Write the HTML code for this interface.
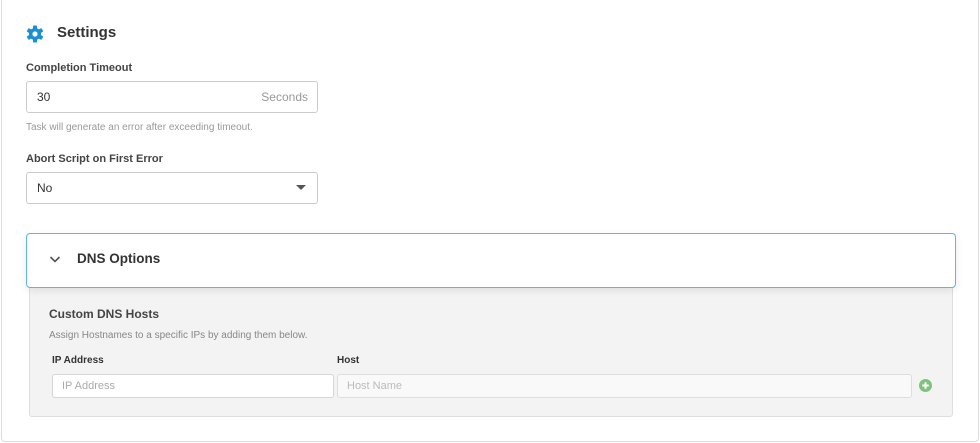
<!DOCTYPE html>
<html><head><style>
*{box-sizing:border-box;margin:0;padding:0}
body{width:980px;height:443px;background:#fff;font-family:"Liberation Sans",sans-serif;position:relative;overflow:hidden;color:#333}
.card{position:absolute;left:1px;top:-10px;width:978px;height:452px;border:1px solid #dcdcdc;border-radius:4px;background:#fff}
.abs{position:absolute}
.lbl{font-size:11px;font-weight:bold;color:#444}
.inp{border:1px solid #ccc;border-radius:3px;background:#fff;height:32px;font-size:12px}
</style></head><body>
<div class="card"></div>
<svg class="abs" style="left:26px;top:25px" width="18" height="18" viewBox="0 0 18 18">
<g fill="#1a8fd6" transform="translate(9 9)">
<rect x="-2" y="-8.5" width="4" height="17" rx="0.8"/>
<rect x="-2" y="-8.5" width="4" height="17" rx="0.8" transform="rotate(60)"/>
<rect x="-2" y="-8.5" width="4" height="17" rx="0.8" transform="rotate(120)"/>
<circle r="6"/>
</g>
<circle cx="9" cy="9" r="2.6" fill="#fff"/>
</svg>
<div class="abs" style="left:57px;top:24px;font-size:15px;font-weight:bold;color:#333">Settings</div>
<div class="abs lbl" style="left:26px;top:62px">Completion Timeout</div>
<div class="abs inp" style="left:26px;top:81px;width:292px"><span class="abs" style="left:10px;top:8px;color:#333">30</span><span class="abs" style="right:9px;top:8px;color:#999">Seconds</span></div>
<div class="abs" style="left:26px;top:122px;font-size:10px;color:#999">Task will generate an error after exceeding timeout.</div>
<div class="abs lbl" style="left:26px;top:153px">Abort Script on First Error</div>
<div class="abs inp" style="left:26px;top:172px;width:292px"><span class="abs" style="left:10px;top:8px">No</span><span class="abs" style="right:11px;top:12px;width:0;height:0;border-left:5px solid transparent;border-right:5px solid transparent;border-top:5px solid #555"></span></div>
<div class="abs" style="left:29px;top:286px;width:924px;height:131px;background:#f3f3f3;border:1px solid #dedede;border-radius:3px"></div>
<div class="abs" style="left:26px;top:233px;width:930px;height:55px;border:1px solid #5cb6e6;border-radius:4px;background:#fff;box-shadow:0 3px 8px rgba(0,0,0,.08)"></div>
<svg class="abs" style="left:49px;top:254px" width="12" height="10" viewBox="0 0 12 10"><path d="M1.5 3l4.5 4.5L10.5 3" fill="none" stroke="#555" stroke-width="1.6"/></svg>
<div class="abs" style="left:77px;top:251px;font-size:13.5px;font-weight:bold;color:#333">DNS Options</div>
<div class="abs" style="left:49px;top:307px;font-size:12px;font-weight:bold;color:#444">Custom DNS Hosts</div>
<div class="abs" style="left:49px;top:330px;font-size:10px;color:#888">Assign Hostnames to a specific IPs by adding them below.</div>
<div class="abs" style="left:52px;top:355px;font-size:10px;font-weight:bold;color:#333">IP Address</div>
<div class="abs" style="left:337px;top:355px;font-size:10px;font-weight:bold;color:#333">Host</div>
<div class="abs" style="left:52px;top:374px;width:282px;height:24px;border:1px solid #d6d6d6;border-radius:3px;background:#fff;font-size:11px;color:#aaa;padding:5px 9px">IP Address</div>
<div class="abs" style="left:337px;top:374px;width:575px;height:24px;border:1px solid #dedede;border-radius:3px;background:#f9f9f9;font-size:11px;color:#bbb;padding:5px 9px">Host Name</div>
<svg class="abs" style="left:919px;top:379px" width="13" height="13" viewBox="0 0 14 14"><circle cx="7" cy="7" r="7" fill="#7ec27e"/><path d="M7 3.5v7M3.5 7h7" stroke="#fff" stroke-width="2.2"/></svg>
</body></html>
